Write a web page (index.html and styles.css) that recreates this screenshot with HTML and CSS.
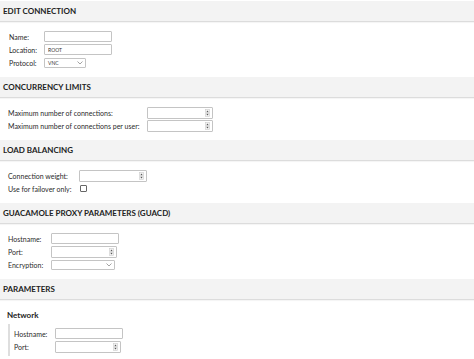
FILE: index.html
```html
<!DOCTYPE html>
<html lang="en">
<head>
  <meta charset="UTF-8">
  <meta name="viewport" content="width=device-width, initial-scale=1.0">
  <title>Edit Connection</title>
  <link rel="stylesheet" href="styles.css">
</head>
<body>
  <!-- Edit Connection -->
  <section class="section">
    <h2 class="header">Edit Connection</h2>
    <div class="body">
      <table class="props">
        <tr><th>Name:</th><td><input class="field text" type="text"></td></tr>
        <tr><th>Location:</th><td><input class="field text small-caps" type="text" value="ROOT"></td></tr>
        <tr><th>Protocol:</th><td>
          <div class="field select proto">
            <span class="value">VNC</span>
            <svg class="chevron" viewBox="0 0 6 4" width="6" height="4"><polyline points="0.5,0.5 3,3 5.5,0.5" fill="none" stroke="#999" stroke-width="0.9"/></svg>
          </div>
        </td></tr>
      </table>
    </div>
  </section>

  <!-- Concurrency Limits -->
  <section class="section">
    <h2 class="header">Concurrency Limits</h2>
    <div class="body">
      <table class="props">
        <tr><th>Maximum number of connections:</th><td>
          <div class="field number"><input type="text"><span class="spin"><svg viewBox="0 0 5 8" width="5" height="8"><rect x="0.5" y="0.5" width="4" height="7" fill="#f4f4f4" stroke="#ccc" stroke-width="0.6"/><polygon points="1.3,3.2 2.5,1.6 3.7,3.2" fill="#555"/><polygon points="1.3,4.8 2.5,6.4 3.7,4.8" fill="#555"/></svg></span></div>
        </td></tr>
        <tr><th>Maximum number of connections per user:</th><td>
          <div class="field number"><input type="text"><span class="spin"><svg viewBox="0 0 5 8" width="5" height="8"><rect x="0.5" y="0.5" width="4" height="7" fill="#f4f4f4" stroke="#ccc" stroke-width="0.6"/><polygon points="1.3,3.2 2.5,1.6 3.7,3.2" fill="#555"/><polygon points="1.3,4.8 2.5,6.4 3.7,4.8" fill="#555"/></svg></span></div>
        </td></tr>
      </table>
    </div>
  </section>

  <!-- Load Balancing -->
  <section class="section">
    <h2 class="header">Load Balancing</h2>
    <div class="body">
      <table class="props">
        <tr><th>Connection weight:</th><td>
          <div class="field number wide"><input type="text"><span class="spin"><svg viewBox="0 0 5 8" width="5" height="8"><rect x="0.5" y="0.5" width="4" height="7" fill="#f4f4f4" stroke="#ccc" stroke-width="0.6"/><polygon points="1.3,3.2 2.5,1.6 3.7,3.2" fill="#555"/><polygon points="1.3,4.8 2.5,6.4 3.7,4.8" fill="#555"/></svg></span></div>
        </td></tr>
        <tr><th>Use for failover only:</th><td><input class="check" type="checkbox"></td></tr>
      </table>
    </div>
  </section>

  <!-- Guacamole Proxy Parameters -->
  <section class="section">
    <h2 class="header">Guacamole Proxy Parameters (guacd)</h2>
    <div class="body">
      <table class="props">
        <tr><th>Hostname:</th><td><input class="field text" type="text"></td></tr>
        <tr><th>Port:</th><td>
          <div class="field number"><input type="text"><span class="spin"><svg viewBox="0 0 5 8" width="5" height="8"><rect x="0.5" y="0.5" width="4" height="7" fill="#f4f4f4" stroke="#ccc" stroke-width="0.6"/><polygon points="1.3,3.2 2.5,1.6 3.7,3.2" fill="#555"/><polygon points="1.3,4.8 2.5,6.4 3.7,4.8" fill="#555"/></svg></span></div>
        </td></tr>
        <tr><th>Encryption:</th><td>
          <div class="field select enc">
            <span class="value"></span>
            <svg class="chevron" viewBox="0 0 6 4" width="6" height="4"><polyline points="0.5,0.5 3,3 5.5,0.5" fill="none" stroke="#999" stroke-width="0.9"/></svg>
          </div>
        </td></tr>
      </table>
    </div>
  </section>

  <!-- Parameters -->
  <section class="section">
    <h2 class="header">Parameters</h2>
    <div class="body">
      <h3 class="group-title">Network</h3>
      <div class="group">
        <table class="props">
          <tr><th>Hostname:</th><td><input class="field text" type="text"></td></tr>
          <tr><th>Port:</th><td>
            <div class="field number"><input type="text"><span class="spin"><svg viewBox="0 0 5 8" width="5" height="8"><rect x="0.5" y="0.5" width="4" height="7" fill="#f4f4f4" stroke="#ccc" stroke-width="0.6"/><polygon points="1.3,3.2 2.5,1.6 3.7,3.2" fill="#555"/><polygon points="1.3,4.8 2.5,6.4 3.7,4.8" fill="#555"/></svg></span></div>
          </td></tr>
        </table>
      </div>
    </div>
  </section>
</body>
</html>
```

FILE: styles.css
```css
/* Global */
body {
  margin: 0;
  font-family: Lato, "Open Sans", sans-serif;
  font-size: 7px;
  color: #2a2a2a;
  background: #fff;
  overflow: hidden;
}

/* Section header band */
.header {
  margin: 0;
  height: 20px;
  line-height: 20px;
  padding: 0 3px;
  font-size: 8px;
  font-weight: 700;
  text-transform: uppercase;
  color: #222;
  background-color: #f3f3f3;
  border-bottom: 1px solid #dcdcdc;
  box-shadow: 0 1px 1px rgba(0, 0, 0, 0.04);
}

.section:first-child .header {
  margin-top: 1px;
}

.body {
  padding: 8px 7px;
}

/* Property tables */
.props {
  border-collapse: collapse;
}

.props th {
  font-weight: 400;
  text-align: left;
  padding: 0 8px 0 1px;
  height: 13px;
  white-space: nowrap;
  color: #2a2a2a;
}

.section:first-child .props th {
  padding-left: 2px;
  padding-right: 7px;
}

.props td {
  padding: 0;
  height: 13px;
}

.field {
  box-sizing: border-box;
  border: 1px solid #c4c4c4;
  border-radius: 1px;
  background: #fff;
  font-family: inherit;
  font-size: 5px;
  color: #333;
  display: block;
}

.text {
  width: 68px;
  height: 11px;
  padding: 0 3px;
  outline: none;
}

.number {
  width: 66px;
  height: 12px;
  display: flex;
  align-items: center;
}

.number input {
  flex: 1;
  min-width: 0;
  border: none;
  outline: none;
  padding: 0;
  height: 9px;
}

.number.wide {
  width: 68px;
}

.spin {
  display: flex;
  margin-right: 2px;
}

.select {
  height: 10px;
  display: flex;
  align-items: center;
  justify-content: space-between;
  padding: 0 2px 0 3px;
}

.proto {
  width: 42px;
}

.enc {
  width: 64px;
}

.check {
  appearance: none;
  -webkit-appearance: none;
  margin: 0 0 0 1px;
  width: 7px;
  height: 7px;
  border: 1px solid #666;
  border-radius: 1px;
  display: block;
}

/* Parameter groups */
.group-title {
  margin: 2px 0 4px;
  font-size: 8px;
  font-weight: 700;
  color: #222;
}

.group {
  border-left: 2px solid #dedede;
  padding: 3px 0 3px 3px;
  margin-left: 1px;
}
```
